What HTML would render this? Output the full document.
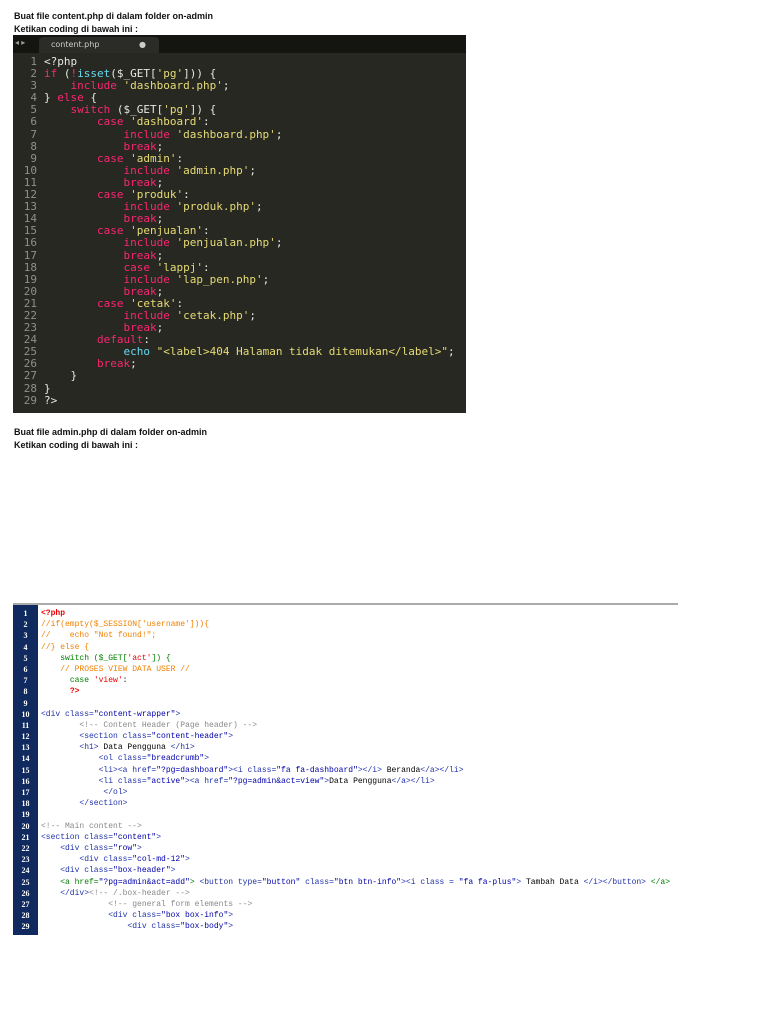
<!DOCTYPE html>
<html><head><meta charset="utf-8"><style>
body{margin:0;background:#fff;width:768px;height:1024px;position:relative;overflow:hidden}
.h{position:absolute;left:14px;font:bold 9px/13px "Liberation Sans",sans-serif;color:#111}
#e1{position:absolute;left:13px;top:35px;width:453px;height:378px;background:#272822}
#tab{position:absolute;left:0;top:0;width:453px;height:18px;background:#141411}
#tab .t{position:absolute;left:26px;top:2px;width:120px;height:16px;background:#2b2b27;border-radius:4px 4px 0 0;font:8px/16px "DejaVu Sans",sans-serif;color:#ccc;padding-left:12px;box-sizing:border-box}
pre{margin:0;position:absolute}
#g1{left:0;top:21px;width:24px;text-align:right;font:11px/12.1px "DejaVu Sans Mono",monospace;color:#8f908a}
#c1{left:31px;top:21px;font:11px/12.1px "DejaVu Sans Mono",monospace;color:#e8e8e2}
.k{color:#f92672}.s{color:#e6db74}.f{color:#66d9ef}
#e2{position:absolute;left:13px;top:603px;width:665px;height:330px;border-top:2px solid #aaa}
#g2{position:absolute;left:0;top:0;width:25px;height:330px;background:#10295f}
#n2{left:0;top:3px;width:25px;text-align:center;font:bold 8px/11.18px "Liberation Serif",serif;color:#fff}
#c2{left:28px;top:3px;font:8px/11.18px "Liberation Mono",monospace;color:#000}
.r{color:#e00}.o{color:#f08000}.g{color:#008000}.b{color:#00a}.c{color:#888}.bl{color:#2233aa}
</style></head><body>
<div class="h" style="top:10px">Buat file content.php di dalam folder on-admin</div>
<div class="h" style="top:23px">Ketikan coding di bawah ini :</div>
<div id="e1"><div id="tab"><span style="position:absolute;left:2px;top:3px;font:8px sans-serif;color:#999">◂ ▸</span><div class="t">content.php<span style="position:absolute;left:100px">●</span></div></div>
<pre id="g1">1
2
3
4
5
6
7
8
9
10
11
12
13
14
15
16
17
18
19
20
21
22
23
24
25
26
27
28
29</pre>
<pre id="c1">&lt;?php
<span class="k">if</span> (<span class="k">!</span><span class="f">isset</span>($_GET[<span class="s">'pg'</span>])) {
    <span class="k">include</span> <span class="s">'dashboard.php'</span>;
} <span class="k">else</span> {
    <span class="k">switch</span> ($_GET[<span class="s">'pg'</span>]) {
        <span class="k">case</span> <span class="s">'dashboard'</span>:
            <span class="k">include</span> <span class="s">'dashboard.php'</span>;
            <span class="k">break</span>;
        <span class="k">case</span> <span class="s">'admin'</span>:
            <span class="k">include</span> <span class="s">'admin.php'</span>;
            <span class="k">break</span>;
        <span class="k">case</span> <span class="s">'produk'</span>:
            <span class="k">include</span> <span class="s">'produk.php'</span>;
            <span class="k">break</span>;
        <span class="k">case</span> <span class="s">'penjualan'</span>:
            <span class="k">include</span> <span class="s">'penjualan.php'</span>;
            <span class="k">break</span>;
            <span class="k">case</span> <span class="s">'lappj'</span>:
            <span class="k">include</span> <span class="s">'lap_pen.php'</span>;
            <span class="k">break</span>;
        <span class="k">case</span> <span class="s">'cetak'</span>:
            <span class="k">include</span> <span class="s">'cetak.php'</span>;
            <span class="k">break</span>;
        <span class="k">default</span>:
            <span class="f">echo</span> <span class="s">"&lt;label&gt;404 Halaman tidak ditemukan&lt;/label&gt;"</span>;
        <span class="k">break</span>;
    }
}
?&gt;</pre>
</div>
<div class="h" style="top:426px">Buat file admin.php di dalam folder on-admin</div>
<div class="h" style="top:439px">Ketikan coding di bawah ini :</div>
<div id="e2"><div id="g2"></div>
<pre id="n2">1
2
3
4
5
6
7
8
9
10
11
12
13
14
15
16
17
18
19
20
21
22
23
24
25
26
27
28
29</pre>
<pre id="c2"><span class="r"><b>&lt;?php</b></span>
<span class="o">//if(empty($_SESSION['username'])){</span>
<span class="o">//    echo "Not found!";</span>
<span class="o">//} else {</span>
    <span class="g">switch ($_GET[</span><span class="r">'act'</span><span class="g">]) {</span>
    <span class="o">// PROSES VIEW DATA USER //</span>
      <span class="g">case</span> <span class="r">'view'</span>:
      <span class="r"><b>?&gt;</b></span>

<span class="bl">&lt;div class=</span><span class="b">"content-wrapper"</span><span class="bl">&gt;</span>
        <span class="c">&lt;!-- Content Header (Page header) --&gt;</span>
        <span class="bl">&lt;section class=</span><span class="b">"content-header"</span><span class="bl">&gt;</span>
        <span class="bl">&lt;h1&gt;</span> Data Pengguna <span class="bl">&lt;/h1&gt;</span>
            <span class="bl">&lt;ol class=</span><span class="b">"breadcrumb"</span><span class="bl">&gt;</span>
            <span class="bl">&lt;li&gt;&lt;a href=</span><span class="b">"?pg=dashboard"</span><span class="bl">&gt;&lt;i class=</span><span class="b">"fa fa-dashboard"</span><span class="bl">&gt;&lt;/i&gt;</span> Beranda<span class="bl">&lt;/a&gt;&lt;/li&gt;</span>
            <span class="bl">&lt;li class=</span><span class="b">"active"</span><span class="bl">&gt;&lt;a href=</span><span class="b">"?pg=admin&amp;act=view"</span><span class="bl">&gt;</span>Data Pengguna<span class="bl">&lt;/a&gt;&lt;/li&gt;</span>
             <span class="bl">&lt;/ol&gt;</span>
        <span class="bl">&lt;/section&gt;</span>

<span class="c">&lt;!-- Main content --&gt;</span>
<span class="bl">&lt;section class=</span><span class="b">"content"</span><span class="bl">&gt;</span>
    <span class="bl">&lt;div class=</span><span class="b">"row"</span><span class="bl">&gt;</span>
        <span class="bl">&lt;div class=</span><span class="b">"col-md-12"</span><span class="bl">&gt;</span>
    <span class="bl">&lt;div class=</span><span class="b">"box-header"</span><span class="bl">&gt;</span>
    <span class="g">&lt;a href=</span><span class="b">"?pg=admin&amp;act=add"</span><span class="g">&gt;</span> <span class="bl">&lt;button type=</span><span class="b">"button"</span><span class="bl"> class=</span><span class="b">"btn btn-info"</span><span class="bl">&gt;&lt;i class = </span><span class="b">"fa fa-plus"</span><span class="bl">&gt;</span> Tambah Data <span class="bl">&lt;/i&gt;&lt;/button&gt;</span> <span class="g">&lt;/a&gt;</span>
    <span class="bl">&lt;/div&gt;</span><span class="c">&lt;!-- /.box-header --&gt;</span>
              <span class="c">&lt;!-- general form elements --&gt;</span>
              <span class="bl">&lt;div class=</span><span class="b">"box box-info"</span><span class="bl">&gt;</span>
                  <span class="bl">&lt;div class=</span><span class="b">"box-body"</span><span class="bl">&gt;</span></pre>
</div>
</body></html>
